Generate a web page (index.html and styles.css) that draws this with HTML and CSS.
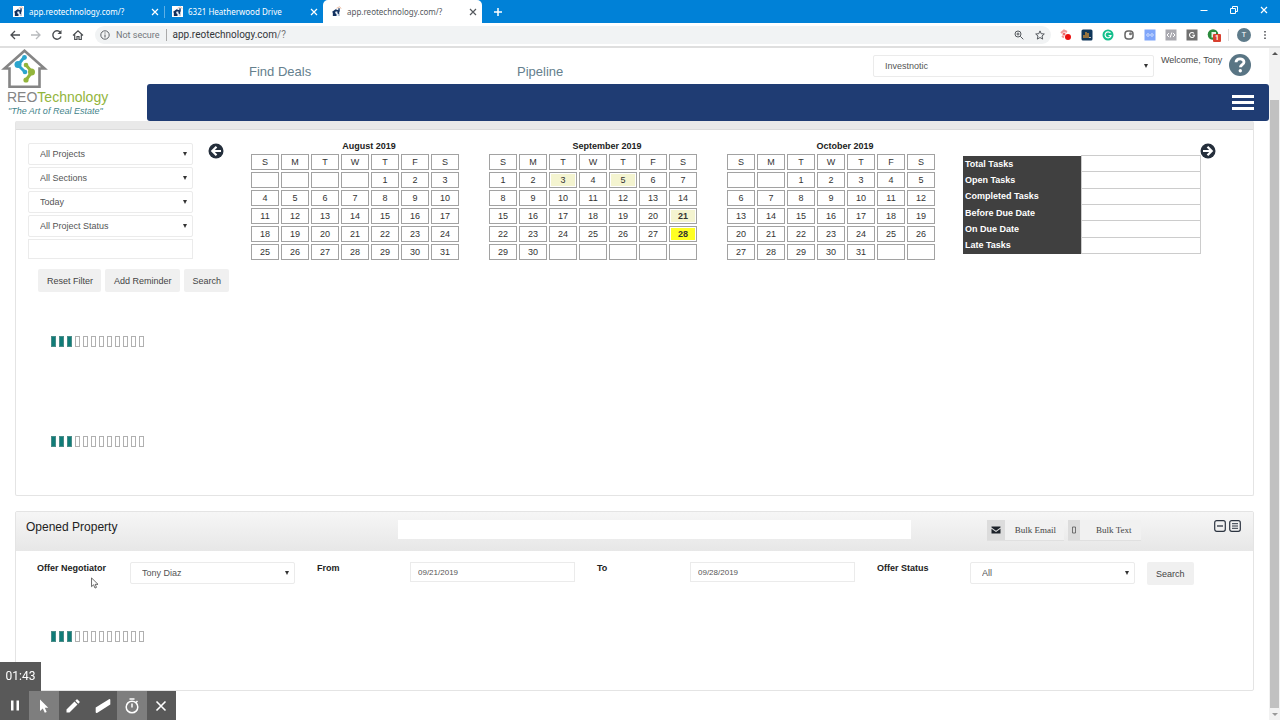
FILE: index.html
```html
<!DOCTYPE html>
<html lang="en">
<head>
<meta charset="utf-8">
<title>app.reotechnology.com/?</title>
<link rel="stylesheet" href="styles.css">
</head>
<body>
<svg class="defs" aria-hidden="true">
  <symbol id="favicon" viewBox="0 0 12 12"><path d="M1 6.500 5 3.500 9 5V11H2V7Z" fill="#12305f"/><path d="M5 6h2v2l1.500 1V11H6V9L4.500 7.500Z" fill="#e8f0fa"/><path d="M8 5V2.500h1.500V6.500Z" fill="#12305f"/><path d="M6 2.500 9.500.8 11 3" fill="none" stroke="#e9b79a"/></symbol>
  <symbol id="x" viewBox="0 0 10 10"><path d="M2 2 8 8M8 2 2 8" fill="none" stroke="currentColor" stroke-width="1.200"/></symbol>
</svg>

<header class="chrome">
  <div class="tabs">
    <div class="tab"><svg class="fav"><use href="#favicon"/></svg><span>app.reotechnology.com/?</span><button aria-label="Close tab"><svg class="ico10"><use href="#x"/></svg></button></div>
    <div class="tab tab-split"><svg class="fav"><use href="#favicon"/></svg><span>6321 Heatherwood Drive</span><button aria-label="Close tab"><svg class="ico10"><use href="#x"/></svg></button></div>
    <div class="tab tab-active"><svg class="fav fav-plain"><use href="#favicon"/></svg><span>app.reotechnology.com/?</span><button aria-label="Close tab"><svg class="ico10"><use href="#x"/></svg></button></div>
    <button class="new-tab" aria-label="New tab"><svg class="ico10" viewBox="0 0 10 10"><path d="M5 1V9M1 5H9" stroke="currentColor" stroke-width="1.500"/></svg></button>
    <div class="window-controls">
      <button aria-label="Minimize"><svg class="ico10" viewBox="0 0 10 10"><path d="M1.500 5.500H8.500" stroke="currentColor"/></svg></button>
      <button aria-label="Restore"><svg class="ico10" viewBox="0 0 10 10"><path d="M1.500 3.500H6.500V8.500H1.500ZM3.500 3V1.500H8.500V6.500H7" fill="none" stroke="currentColor"/></svg></button>
      <button aria-label="Close"><svg class="ico10"><use href="#x"/></svg></button>
    </div>
  </div>
  <div class="toolbar">
    <div class="nav-buttons">
      <button aria-label="Back"><svg class="ico12" viewBox="0 0 12 12"><path d="M11 6H2M6 2 2 6 6 10" fill="none" stroke="#4a4d51" stroke-width="1.300"/></svg></button>
      <button aria-label="Forward"><svg class="ico12" viewBox="0 0 12 12"><path d="M1 6H10M6 2 10 6 6 10" fill="none" stroke="#b8babd" stroke-width="1.300"/></svg></button>
      <button aria-label="Reload"><svg class="ico12" viewBox="0 0 12 12"><path d="M10 7.500A4.200 4.200 0 1 1 9.200 3.200" fill="none" stroke="#4a4d51" stroke-width="1.400"/><path d="M10.500 1V5H6.500Z" fill="#4a4d51"/></svg></button>
      <button aria-label="Home"><svg class="ico12" viewBox="0 0 12 12"><path d="M1 6.500 6 1.800 11 6.500M2.700 5.500V10.500H5V7.500H7V10.500H9.300V5.500" fill="none" stroke="#4a4d51" stroke-width="1.200"/></svg></button>
    </div>
    <div class="omnibox">
      <svg class="ico10" viewBox="0 0 10 10"><circle cx="5" cy="5" r="4.200" fill="none" stroke="#5f6368"/><path d="M5 4.400V7.400M5 2.500V3.600" stroke="#5f6368" stroke-width="1.100"/></svg>
      <span class="insecure">Not secure</span>
      <span class="url">app.reotechnology.com<span class="url-path">/?</span></span>
      <button aria-label="Zoom" class="push"><svg class="ico10" viewBox="0 0 10 10"><circle cx="4" cy="4" r="3" fill="none" stroke="#55595e"/><path d="M6.300 6.300 9.300 9.300M2.500 4H5.500M4 2.500V5.500" stroke="#55595e"/></svg></button>
      <button aria-label="Bookmark"><svg class="ico10" viewBox="0 0 10 10"><path d="M5 .9 6.200 3.700 9.300 4 7 6 7.700 9.100 5 7.500 2.300 9.100 3 6 .7 4 3.800 3.700Z" fill="none" stroke="#55595e"/></svg></button>
    </div>
    <div class="extensions">
      <svg viewBox="0 0 12 12"><path d="M1 4 4 1.500 7 3M2 7 4 8.500" stroke="#f19a9a" stroke-width="2" fill="none"/><circle cx="8" cy="8" r="3" fill="#ea1010"/><circle cx="4" cy="5" r="1.500" fill="#ef6a6a"/></svg>
      <svg viewBox="0 0 12 12"><rect x=".5" y=".5" width="11" height="11" rx="1.500" fill="#0e3559"/><path d="M3 9V6M5 9V3M7 9V4" stroke="#f09a2d" stroke-width="1.200"/><path d="M8 8.500H10" stroke="#bbb"/></svg>
      <svg viewBox="0 0 12 12"><circle cx="6" cy="6" r="5.500" fill="#14bf8c"/><path d="M8.500 4A3 3 0 1 0 9 6.500H6.500" fill="none" stroke="#fff" stroke-width="1.200"/></svg>
      <svg viewBox="0 0 12 12"><rect x="2" y="2" width="8" height="8" rx="3" fill="#fff" stroke="#666" stroke-width="1.500"/><circle cx="7.500" cy="4.800" r="1.500" fill="#777"/></svg>
      <svg viewBox="0 0 12 12"><rect x=".5" y=".5" width="11" height="11" fill="#7fa5fa"/><circle cx="4" cy="6" r="1.300" fill="none" stroke="#dbe6ff" stroke-width=".8"/><circle cx="8" cy="6" r="1.300" fill="none" stroke="#dbe6ff" stroke-width=".8"/></svg>
      <svg viewBox="0 0 12 12"><rect x=".5" y=".5" width="11" height="11" fill="#a9a9b0"/><path d="M4 4 2 6 4 8M8 4 10 6 8 8M6.800 3.500 5.200 8.500" fill="none" stroke="#fff"/></svg>
      <svg viewBox="0 0 12 12"><rect x=".5" y=".5" width="11" height="11" fill="#717171"/><path d="M8 4.500A2.500 2.500 0 1 0 8.500 6.300H6.300" fill="none" stroke="#fff" stroke-width="1.100"/></svg>
      <span class="ext-badged"><svg viewBox="0 0 12 12"><circle cx="6" cy="5.500" r="5.300" fill="#2b8a3c"/><path d="M4.500 3V8.500H9V3Z" fill="#e7f3e7"/></svg><span class="ext-count">1</span></span>
    </div>
    <span class="avatar">T</span>
    <button aria-label="Menu" class="kebab"><svg class="ico10" viewBox="0 0 10 10"><path d="M4.200 1h1.600v1.600H4.200zM4.200 4.200h1.600v1.600H4.200zM4.200 7.400h1.600V9H4.200z" fill="#505357"/></svg></button>
  </div>
</header>

<div class="viewport">
  <div class="page">
    <header class="site-head">
      <a class="logo" href="#">
        <svg class="logo-mark" viewBox="0 0 48 42"><path d="M4.500 20.500 24.500 2.800 44.500 20.500H39.500V38.800H9.500V20.500Z" fill="#fff" stroke="#858585" stroke-width="2.600"/><path d="M24 9.500 18 17 25 24" fill="none" stroke="#2ba5ce" stroke-width="3"/><circle cx="24.500" cy="9.500" r="2.400" fill="#2ba5ce"/><circle cx="18" cy="16.500" r="3.500" fill="#2ba5ce"/><circle cx="25" cy="24" r="2.300" fill="#2ba5ce"/><path d="M26 17 32 24 26 32" fill="none" stroke="#93b53c" stroke-width="3"/><circle cx="26" cy="17" r="2.300" fill="#93b53c"/><circle cx="31.500" cy="24" r="3.500" fill="#93b53c"/><circle cx="26" cy="32" r="2.600" fill="#93b53c"/></svg>
        <span class="logo-name">REO<span class="logo-green">Technology</span></span>
        <span class="logo-tag">"The Art of Real Estate"</span>
      </a>
      <div class="head-main">
        <nav class="top-row">
          <a href="#">Find Deals</a>
          <a href="#">Pipeline</a>
          <span class="select"><select aria-label="Company"><option>Investnotic</option></select></span>
          <span class="welcome">Welcome, Tony <svg class="help" viewBox="0 0 22 22"><circle cx="11" cy="11" r="11" fill="#597584"/><path d="M7 8.300C7.200 3.800 15 4 15 8 15 10.600 11.500 10.600 11.400 13.300" fill="none" stroke="#fff" stroke-width="2.800"/><circle cx="11.300" cy="16.700" r="1.700" fill="#fff"/></svg></span>
        </nav>
        <div class="navbar"><button class="burger" aria-label="Open menu"><span></span><span></span><span></span></button></div>
      </div>
    </header>

    <main>
      <section class="panel" aria-label="Tasks">
        <div class="strip"></div>
        <div class="task-grid">
          <div class="filters">
            <div class="filter-fields">
              <span class="select"><select aria-label="Project"><option>All Projects</option></select></span>
              <span class="select"><select aria-label="Section"><option>All Sections</option></select></span>
              <span class="select"><select aria-label="Period"><option>Today</option></select></span>
              <span class="select"><select aria-label="Project status"><option>All Project Status</option></select></span>
              <input class="field" type="text" aria-label="Search text">
            </div>
            <button class="arrow" aria-label="Previous months"><svg viewBox="0 0 16 16"><circle cx="8" cy="8" r="7.500" fill="#252f3c"/><path d="M13 8H5M8.500 3.800 4.300 8 8.500 12.200" fill="none" stroke="#fff" stroke-width="2.200"/></svg></button>
            <div class="filter-buttons"><button class="btn">Reset Filter</button><button class="btn">Add Reminder</button><button class="btn">Search</button></div>
          </div>

          <table class="cal">
            <caption>August 2019</caption>
            <thead><tr><th>S</th><th>M</th><th>T</th><th>W</th><th>T</th><th>F</th><th>S</th></tr></thead>
            <tbody>
              <tr><td></td><td></td><td></td><td></td><td>1</td><td>2</td><td>3</td></tr>
              <tr><td>4</td><td>5</td><td>6</td><td>7</td><td>8</td><td>9</td><td>10</td></tr>
              <tr><td>11</td><td>12</td><td>13</td><td>14</td><td>15</td><td>16</td><td>17</td></tr>
              <tr><td>18</td><td>19</td><td>20</td><td>21</td><td>22</td><td>23</td><td>24</td></tr>
              <tr><td>25</td><td>26</td><td>27</td><td>28</td><td>29</td><td>30</td><td>31</td></tr>
            </tbody>
          </table>
          <table class="cal">
            <caption>September 2019</caption>
            <thead><tr><th>S</th><th>M</th><th>T</th><th>W</th><th>T</th><th>F</th><th>S</th></tr></thead>
            <tbody>
              <tr><td>1</td><td>2</td><td class="marked">3</td><td>4</td><td class="marked">5</td><td>6</td><td>7</td></tr>
              <tr><td>8</td><td>9</td><td>10</td><td>11</td><td>12</td><td>13</td><td>14</td></tr>
              <tr><td>15</td><td>16</td><td>17</td><td>18</td><td>19</td><td>20</td><td class="marked strong">21</td></tr>
              <tr><td>22</td><td>23</td><td>24</td><td>25</td><td>26</td><td>27</td><td class="today strong">28</td></tr>
              <tr><td>29</td><td>30</td><td></td><td></td><td></td><td></td><td></td></tr>
            </tbody>
          </table>
          <table class="cal">
            <caption>October 2019</caption>
            <thead><tr><th>S</th><th>M</th><th>T</th><th>W</th><th>T</th><th>F</th><th>S</th></tr></thead>
            <tbody>
              <tr><td></td><td></td><td>1</td><td>2</td><td>3</td><td>4</td><td>5</td></tr>
              <tr><td>6</td><td>7</td><td>8</td><td>9</td><td>10</td><td>11</td><td>12</td></tr>
              <tr><td>13</td><td>14</td><td>15</td><td>16</td><td>17</td><td>18</td><td>19</td></tr>
              <tr><td>20</td><td>21</td><td>22</td><td>23</td><td>24</td><td>25</td><td>26</td></tr>
              <tr><td>27</td><td>28</td><td>29</td><td>30</td><td>31</td><td></td><td></td></tr>
            </tbody>
          </table>

          <table class="totals">
            <tr><th scope="row">Total Tasks</th><td></td></tr>
            <tr><th scope="row">Open Tasks</th><td></td></tr>
            <tr><th scope="row">Completed Tasks</th><td></td></tr>
            <tr><th scope="row">Before Due Date</th><td></td></tr>
            <tr><th scope="row">On Due Date</th><td></td></tr>
            <tr><th scope="row">Late Tasks</th><td></td></tr>
          </table>
          <button class="arrow arrow-next" aria-label="Next months"><svg viewBox="0 0 16 16"><circle cx="8" cy="8" r="7.500" fill="#252f3c"/><path d="M3 8H11M7.500 3.800 11.700 8 7.500 12.200" fill="none" stroke="#fff" stroke-width="2.200"/></svg></button>
        </div>
        <div class="loader"><i></i><i></i><i></i><i></i><i></i><i></i><i></i><i></i><i></i><i></i><i></i><i></i></div>
        <div class="loader"><i></i><i></i><i></i><i></i><i></i><i></i><i></i><i></i><i></i><i></i><i></i><i></i></div>
      </section>

      <section class="panel">
        <div class="panel-head">
          <h2>Opened Property</h2>
          <input class="head-search" type="text" aria-label="Search property">
          <div class="bulk">
            <button class="bulk-btn"><span class="bulk-icon"><svg viewBox="0 0 10 8"><path d="M.5.500H9.500V1.500L5 4.800.5 1.500ZM.5 2.800 5 6 9.500 2.800V7.500H.5Z" fill="#1c2229"/></svg></span><span class="bulk-text">Bulk Email</span></button>
            <button class="bulk-btn bulk-narrow"><span class="bulk-icon"><svg viewBox="0 0 10 8"><path d="M3.500 1H6.500V7H3.500Z" fill="none" stroke="#555" stroke-width=".8"/></svg></span><span class="bulk-text">Bulk Text</span></button>
          </div>
          <div class="panel-tools">
            <button aria-label="Collapse"><svg viewBox="0 0 12 12"><rect x=".7" y=".7" width="10.600" height="10.600" rx="2" fill="none" stroke="#2c3440" stroke-width="1.200"/><path d="M3 6H9" stroke="#2c3440" stroke-width="1.300"/></svg></button>
            <button aria-label="Options"><svg viewBox="0 0 12 12"><rect x=".7" y=".7" width="10.600" height="10.600" rx="2" fill="none" stroke="#2c3440" stroke-width="1.200"/><path d="M3 3.700H9M3 6H9M3 8.300H9" stroke="#2c3440"/></svg></button>
          </div>
        </div>
        <form class="offer-form">
          <div class="pair"><label for="negotiator">Offer Negotiator</label><span class="select"><select id="negotiator"><option>Tony Diaz</option></select></span></div>
          <div class="pair"><label for="from">From</label><input id="from" class="field" type="text" value="09/21/2019"></div>
          <div class="pair"><label for="to">To</label><input id="to" class="field" type="text" value="09/28/2019"></div>
          <div class="pair pair-last"><label for="status">Offer Status</label><span class="select"><select id="status"><option>All</option></select></span></div>
          <button class="btn" type="button">Search</button>
        </form>
        <div class="loader"><i></i><i></i><i></i><i></i><i></i><i></i><i></i><i></i><i></i><i></i><i></i><i></i></div>
      </section>
    </main>
  </div>
  <div class="scrollbar" aria-hidden="true"><span class="up"></span><span class="thumb"></span><span class="down"></span></div>
</div>

<svg class="cursor" viewBox="0 0 9 13"><path d="M.6.800V10.600L2.900 8.500 4.500 12.200 6.200 11.400 4.700 8H7.900Z" fill="#fff" stroke="#333" stroke-width=".8"/></svg>

<div class="recorder">
  <div class="timer">01:43</div>
  <div class="rec-buttons">
    <button aria-label="Pause"><svg viewBox="0 0 16 16"><path d="M4 2.500H6.500V12.500H4ZM9.500 2.500H12V12.500H9.500Z" fill="#fff"/></svg></button>
    <button aria-label="Pointer" class="on"><svg viewBox="0 0 16 16"><path d="M4 1.500V13L6.800 10.500 8.800 14.800 10.700 14 8.800 9.800H12.300Z" fill="#fff"/></svg></button>
    <button aria-label="Pen"><svg viewBox="0 0 16 16"><path d="M1.500 14.500V11.500L9.500 3.500 12.500 6.500 4.500 14.500ZM10.300 2.700 11.500 1.500Q12 1 12.500 1.500L14.500 3.500Q15 4 14.500 4.500L13.300 5.700Z" fill="#fff"/></svg></button>
    <button aria-label="Eraser"><svg viewBox="0 0 16 16"><path d="M.7 9.500 14 1.200Q15.300.8 15.300 2V6.500L2 15Q.7 15.300.7 14Z" fill="#fff"/></svg></button>
    <button aria-label="Stopwatch" class="on"><svg viewBox="0 0 16 16"><circle cx="8" cy="9" r="5.800" fill="none" stroke="#fff" stroke-width="1.500"/><path d="M8 5.500V9.500M5.500 1H10.500M12 4.500 13.500 3" stroke="#fff" stroke-width="1.500"/></svg></button>
    <button aria-label="Close recorder"><svg viewBox="0 0 16 16"><path d="M3.500 3.500 12.500 12.500M12.500 3.500 3.500 12.500" stroke="#fff" stroke-width="1.600"/></svg></button>
  </div>
</div>
</body>
</html>
```
FILE: styles.css
```css
* { box-sizing: border-box; }

body {
  margin: 0;
  min-height: 100vh;
  display: flex;
  flex-direction: column;
  background: #fff;
  color: #333;
  font: 9px/12px "Liberation Sans", Arial, sans-serif;
}

button, input, select { font: inherit; color: inherit; margin: 0; }
button { border: 0; padding: 0; background: none; display: inline-flex; align-items: center; justify-content: center; }
svg { display: block; flex: none; }
a { color: inherit; text-decoration: none; }
.defs { position: absolute; width: 0; height: 0; }
.ico10 { width: 10px; height: 10px; }
.ico12 { width: 12px; height: 12px; }

/* Browser frame */
.chrome { border-bottom: 2px solid #dfdfdf; font-family: "Noto Sans", "Open Sans", sans-serif; }
.tabs { display: flex; height: 23px; padding-left: 5px; background: #0081d7; color: #fff; }
.tab { display: flex; align-items: center; gap: 5px; width: 159px; padding: 0 4px 0 8px; font-size: 8px; }
.tab span { flex: 1; white-space: nowrap; }
.tab-split { position: relative; }
.tab-split::before { content: ""; position: absolute; left: 0; top: 6px; width: 1px; height: 12px; background: #5eb0e6; }
.tab-active { background: #fff; color: #55595e; border-radius: 5px 5px 0 0; }
.fav { width: 11px; height: 11px; background: #fff; }
.fav-plain { background: none; }
.new-tab { width: 32px; }
.window-controls { display: flex; gap: 20px; margin-left: auto; padding: 0 11px 4px 0; }
.toolbar { display: flex; align-items: center; height: 23px; padding: 0 10px 0 9px; background: #fff; }
.nav-buttons { display: flex; gap: 9px; width: 86px; }
.omnibox { display: flex; flex: 1; align-items: center; height: 18px; padding: 0 6px 0 5px; border-radius: 9px; background: #f1f3f4; font: 10px/12px Roboto, sans-serif; }
.insecure { padding: 0 6px; color: #73777b; font-size: 9px; }
.url { padding-left: 6px; border-left: 1px solid #aaa; color: #33363a; }
.url-path { color: #777; }
.push { margin: 0 11px 0 auto; }
.extensions { display: flex; gap: 9px; padding: 0 9px; border-right: 1px solid #ddd; }
.extensions svg { width: 12px; height: 12px; }
.ext-badged { position: relative; }
.ext-count { position: absolute; left: 6px; top: 5px; width: 8px; height: 8px; border-radius: 1px; background: #d8402f; color: #fff; font: bold 7px/8px Roboto, sans-serif; text-align: center; }
.avatar { width: 14px; height: 14px; margin: 0 9px 0 8px; border-radius: 50%; background: #5e7b8a; color: #fff; font: 8px/14px Roboto, sans-serif; text-align: center; }

/* Page and scroll bar */
.viewport { display: flex; flex: 1; }
.page { flex: 1; min-width: 0; }
.scrollbar { display: flex; flex-direction: column; align-items: center; width: 11px; padding: 4px 0; background: #f2f2f2; }
.up, .down { border: 3px solid transparent; }
.up { border-top: 0; border-bottom: 3px solid #555; }
.down { border-bottom: 0; border-top: 3px solid #999; }
.thumb { flex: 1; width: 9px; margin: 45px 0 5px; background: #c1c1c1; }

/* Site header */
.site-head { display: grid; grid-template-columns: 147px 1fr; }
.logo { display: flex; flex-direction: column; }
.logo-mark { width: 48px; height: 42px; }
.logo-name { padding-left: 7px; font-size: 14px; line-height: 15px; color: #858585; }
.logo-green { color: #93b53c; }
.logo-tag { padding-left: 8px; font-size: 9px; line-height: 13px; font-style: italic; color: #42838a; }
.top-row { display: grid; grid-template-columns: 268fr 356fr 281fr 115fr; height: 36px; padding-left: 102px; font-size: 13px; line-height: 16px; color: #65808d; }
.top-row > a { align-self: end; margin-bottom: 4px; }
.top-row .select { margin-top: 7px; font-size: 9px; }
.welcome { display: flex; gap: 7px; padding: 6px 0 0 7px; font-size: 9px; line-height: 13px; color: #4a4a4a; white-space: nowrap; }
.help { width: 22px; height: 22px; }
.navbar { display: flex; justify-content: flex-end; align-items: center; height: 37px; padding-right: 15px; border-radius: 3px; background: #1f3c73; }
.burger { flex-direction: column; gap: 3px; width: 22px; }
.burger span { width: 22px; height: 3px; background: #fff; }

/* Controls */
.select { position: relative; display: block; height: 22px; }
.select::after { content: ""; position: absolute; right: 6px; top: 9px; border: 2px solid transparent; border-top: 4px solid #333; border-bottom: 0; pointer-events: none; }
.select select { appearance: none; width: 100%; height: 100%; padding: 0 12px 0 11px; border: 1px solid #ebebeb; border-radius: 2px; background: #fff; color: #555; }
.field { display: block; width: 100%; height: 20px; padding: 0 7px; border: 1px solid #ebebeb; background: #fff; color: #555; font-size: 8px; }
.btn { height: 23px; padding: 0 9px; border-radius: 2px; background: #f0f0f0; color: #444; white-space: nowrap; }

/* Panels */
main { padding: 0 15px; }
.panel { margin-bottom: 15px; padding-bottom: 48px; border: 1px solid #e4e4e4; border-radius: 2px; }
.panel:first-child { border-top: 0; }
.panel + .panel { margin-bottom: 0; padding-bottom: 48px; }
.strip { height: 9px; border-bottom: 1px solid #dcdcdc; background: #e9e9e9; }
.task-grid { display: grid; grid-template-columns: 234fr repeat(4, 238fr) 51fr; height: 181px; padding-top: 11px; }
.filters { display: grid; grid-template-columns: 165px auto; justify-content: start; align-content: start; column-gap: 15px; padding: 2px 0 0 12px; }
.filter-fields { display: grid; gap: 2px; }
.arrow { align-self: start; width: 16px; height: 16px; }
.arrow svg { width: 16px; height: 16px; }
.arrow-next { margin: 2px 0 0 -2px; }
.filter-buttons { grid-column: 1 / -1; display: flex; gap: 4px; padding: 10px 0 0 10px; }
.filter-buttons .btn { padding: 0 8px 0 9px; }

.cal { width: 212px; align-self: start; margin-left: -1px; border-spacing: 2px; table-layout: fixed; }
.cal caption { padding-left: 28px; font-weight: bold; line-height: 11px; color: #222; }
.cal th, .cal td { height: 16px; padding: 0; border: 1px solid #a2a2a2; font-weight: normal; line-height: 12px; text-align: center; }
.cal .marked, .cal .today { background: #f4f4d0; box-shadow: inset 0 0 0 1px #fff; }
.cal .today { background: #ff2; }
.cal .strong { font-weight: bold; }

.totals { align-self: start; height: 99px; margin: 14px 0 0 -1px; border-collapse: collapse; table-layout: fixed; width: 100%; }
.totals th { padding: 0 2px; background: #404040; color: #fff; text-align: left; line-height: 14px; }
.totals td { border: 1px solid #ccc; padding: 0; }

.loader { display: flex; gap: 3px; height: 11px; margin: 25px 0 89px 35px; }
.loader + .loader { margin: 0 0 0 35px; }
.loader i { width: 5px; border: 1px solid #b0b0b0; }
.loader i:nth-child(-n+3) { border-color: #4b8c88; background: #107c78; }

.panel-head { display: grid; grid-template-columns: 372fr 512fr 76fr 227fr 28px; align-items: start; height: 39px; padding: 8px 11px 0 10px; background: linear-gradient(#f6f6f6, #e7e7e7); }
.panel-head h2 { margin: 0; font-size: 12px; line-height: 14px; font-weight: normal; color: #222; }
.head-search { width: 100%; height: 19px; padding: 0 8px; border: 0; background: #fff; }
.bulk { grid-column: 4; display: flex; gap: 4px; }
.bulk-btn { height: 21px; background: #f1f1f1; color: #444; font-family: "Liberation Serif", "Times New Roman", serif; border-bottom: 1px solid #e0e0e0; }
.bulk-icon { display: flex; align-items: center; justify-content: center; align-self: stretch; width: 18px; background: #dcdcdc; }
.bulk-icon svg { width: 10px; height: 8px; }
.bulk-narrow .bulk-icon { width: 12px; }
.bulk-text { padding: 0 8px 0 10px; }
.bulk-narrow .bulk-text { padding: 0 9px 0 16px; }
.panel-tools { display: flex; gap: 3px; }
.panel-tools svg { width: 12px; height: 12px; }

.offer-form { display: grid; grid-template-columns: repeat(3, 280fr) 270fr 106fr; align-items: start; padding: 11px 0 0 21px; }
.offer-form .btn { justify-self: start; }
.pair { display: grid; grid-template-columns: 93fr 165fr; padding-right: 22px; }
.pair-last { padding-right: 12px; }
.pair label { font-weight: bold; color: #222; white-space: nowrap; }
.offer-form + .loader { margin: 46px 0 0 35px; }

/* Overlays */
.cursor { position: absolute; left: 91px; top: 577px; width: 8px; height: 12px; }
.recorder { position: fixed; left: 0; bottom: 0; }
.timer { width: 41px; height: 29px; background: #595959; color: #fff; font: 12px/29px Roboto, sans-serif; text-align: center; }
.rec-buttons { display: grid; grid-template-columns: repeat(6, 1fr); width: 176px; height: 29px; background: #595959; }
.rec-buttons .on { background: #7e7e7e; }
.rec-buttons svg { width: 16px; height: 16px; }
```
